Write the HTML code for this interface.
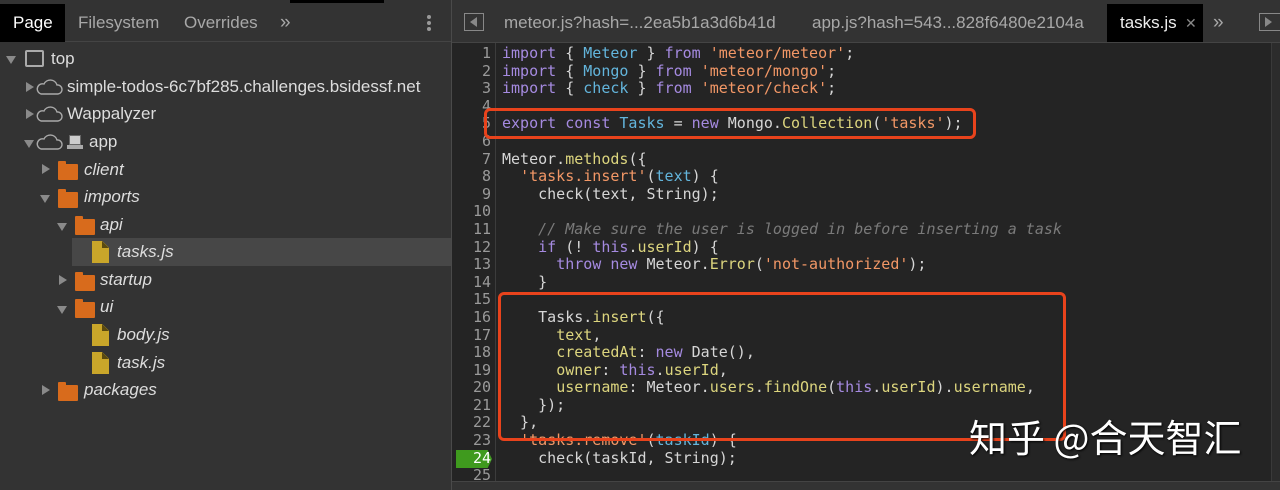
<!DOCTYPE html>
<html><head><meta charset="utf-8"><style>
*{margin:0;padding:0;box-sizing:border-box}
body{width:1280px;height:490px;background:#333;overflow:hidden;position:relative;font-family:"Liberation Sans",sans-serif;color:#ddd}
.abs{position:absolute}
.tab{position:absolute;top:11px;font-size:17px;color:#a8a8a8;line-height:24px}
.row{position:absolute;height:27px;font-size:17px;line-height:27px;color:#ddd;white-space:nowrap}
.tri{position:absolute;width:0;height:0}
.td{border-left:5px solid transparent;border-right:5px solid transparent;border-top:8px solid #8a8a8a}
.tr{border-top:5px solid transparent;border-bottom:5px solid transparent;border-left:8px solid #8a8a8a}
.fold{position:absolute;width:20px;height:16px;background:#d86b1c;border-radius:1px}
.fold:before{content:"";position:absolute;left:0;top:-3px;width:8px;height:4px;background:#d86b1c;border-radius:1px 1px 0 0}
.file{position:absolute;width:17px;height:22px;background:#c9a62a;clip-path:polygon(0 0,60% 0,100% 30%,100% 100%,0 100%)}
.file:after{content:"";position:absolute;left:10px;top:0;width:7px;height:7px;background:#5a4a10;clip-path:polygon(0 0,100% 100%,0 100%)}
i{font-style:italic}
#code{position:absolute;left:452px;top:43px;width:819px;height:438px;background:#242424}
.ln{position:absolute;left:0;width:39px;text-align:right;font:15px/17.6px "DejaVu Sans Mono",monospace;color:#9a9a9a}
.cl{position:absolute;left:50px;font:15px/17.6px "DejaVu Sans Mono",monospace;color:#d6d6d6;white-space:pre}
.k{color:#a58ae0}.s{color:#f29766}.v{color:#63b5dc}.p{color:#dcd57e}.c{color:#7a7a7a;font-style:italic}
</style></head><body>
<div class="abs" style="left:0;top:0;width:452px;height:42px;background:#333;border-bottom:1px solid #444"></div>
<div class="abs" style="left:0;top:4px;width:65px;height:38px;background:#000"></div>
<div class="abs" style="left:290px;top:0;width:94px;height:3px;background:#000"></div>
<div class="tab" style="left:13px;color:#fff">Page</div>
<div class="tab" style="left:78px">Filesystem</div>
<div class="tab" style="left:184px">Overrides</div>
<div class="tab" style="left:280px;font-size:19px">»</div>
<div class="abs" style="left:427px;top:15px;width:4px;height:4px;background:#999;border-radius:2px;box-shadow:0 6px 0 #999,0 12px 0 #999"></div>
<div class="abs" style="left:451px;top:0;width:1px;height:490px;background:#4a4a4a"></div>
<div class="tri td" style="left:6px;top:56px"></div>
<div class="abs" style="left:25px;top:50px;width:19px;height:17px;border:2px solid #aaa;border-radius:2px"></div>
<div class="row" style="left:51px;top:45px">top</div>
<svg class="abs" style="left:0;top:0" width="120" height="160" fill="none" stroke="#aaa" stroke-width="1.4">
<path d="M41 94 h17 a4.5 4.5 0 0 0 -1 -9 a7 7 0 0 0 -13 -1 a5 5 0 0 0 -3 10z"/>
<path d="M41 121 h17 a4.5 4.5 0 0 0 -1 -9 a7 7 0 0 0 -13 -1 a5 5 0 0 0 -3 10z"/>
<path d="M41 149 h17 a4.5 4.5 0 0 0 -1 -9 a7 7 0 0 0 -13 -1 a5 5 0 0 0 -3 10z"/>
</svg>
<div class="tri tr" style="left:26px;top:82px"></div>
<div class="row" style="left:67px;top:73px">simple-todos-6c7bf285.challenges.bsidessf.net</div>
<div class="tri tr" style="left:26px;top:109px"></div>
<div class="row" style="left:67px;top:100px">Wappalyzer</div>
<div class="tri td" style="left:24px;top:140px"></div>
<div class="abs" style="left:69px;top:135px;width:12px;height:10px;background:#ccc;border:1px solid #666"></div>
<div class="abs" style="left:67px;top:145px;width:16px;height:4px;background:#aaa"></div>
<div class="row" style="left:89px;top:128px">app</div>
<div class="tri tr" style="left:42px;top:164px"></div>
<div class="fold" style="left:58px;top:164px"></div>
<div class="row" style="left:84px;top:156px"><i>client</i></div>
<div class="tri td" style="left:40px;top:195px"></div>
<div class="fold" style="left:58px;top:192px"></div>
<div class="row" style="left:84px;top:183px"><i>imports</i></div>
<div class="tri td" style="left:57px;top:223px"></div>
<div class="fold" style="left:75px;top:219px"></div>
<div class="row" style="left:100px;top:211px"><i>api</i></div>
<div class="abs" style="left:72px;top:238px;width:379px;height:28px;background:#474747"></div>
<div class="file" style="left:92px;top:241px"></div>
<div class="row" style="left:117px;top:238px"><i>tasks.js</i></div>
<div class="tri tr" style="left:59px;top:275px"></div>
<div class="fold" style="left:75px;top:275px"></div>
<div class="row" style="left:100px;top:266px"><i>startup</i></div>
<div class="tri td" style="left:57px;top:306px"></div>
<div class="fold" style="left:75px;top:302px"></div>
<div class="row" style="left:100px;top:293px"><i>ui</i></div>
<div class="file" style="left:92px;top:324px"></div>
<div class="row" style="left:117px;top:321px"><i>body.js</i></div>
<div class="file" style="left:92px;top:352px"></div>
<div class="row" style="left:117px;top:349px"><i>task.js</i></div>
<div class="tri tr" style="left:42px;top:385px"></div>
<div class="fold" style="left:58px;top:385px"></div>
<div class="row" style="left:84px;top:376px"><i>packages</i></div>
<div class="abs" style="left:452px;top:42px;width:828px;height:1px;background:#444"></div>
<div class="abs" style="left:464px;top:13px;width:20px;height:18px;border:1.5px solid #888"></div>
<div class="abs" style="left:470px;top:17px;border-top:5px solid transparent;border-bottom:5px solid transparent;border-right:7px solid #888"></div>
<div class="tab" style="left:504px">meteor.js?hash=...2ea5b1a3d6b41d</div>
<div class="tab" style="left:812px">app.js?hash=543...828f6480e2104a</div>
<div class="abs" style="left:1107px;top:4px;width:96px;height:38px;background:#000"></div>
<div class="tab" style="left:1120px;color:#eee">tasks.js</div>
<div class="tab" style="left:1185px;color:#888;font-size:14px">✕</div>
<div class="tab" style="left:1213px;font-size:19px">»</div>
<div class="abs" style="left:1259px;top:13px;width:22px;height:18px;border:1.5px solid #888"></div>
<div class="abs" style="left:1265px;top:17px;border-top:5px solid transparent;border-bottom:5px solid transparent;border-left:7px solid #888"></div>
<div id="code">
<div class="abs" style="left:43px;top:0;width:1px;height:438px;background:#3c3c3c"></div>
<div class="abs" style="left:819px;top:0;width:9px;height:438px;background:#2c2c2c;border-left:1px solid #3a3a3a"></div>
<div class="abs" style="left:4px;top:407px;width:36px;height:18px;background:#3f9a1e;clip-path:polygon(0 0,88% 0,100% 50%,88% 100%,0 100%)"></div>
<div class="ln" style="top:2px">1<br>2<br>3<br>4<br>5<br>6<br>7<br>8<br>9<br>10<br>11<br>12<br>13<br>14<br>15<br>16<br>17<br>18<br>19<br>20<br>21<br>22<br>23<br><span style="color:#fff">24</span><br>25</div>
<div class="cl" style="top:2px"><span class="k">import</span> { <span class="v">Meteor</span> } <span class="k">from</span> <span class="s">'meteor/meteor'</span>;
<span class="k">import</span> { <span class="v">Mongo</span> } <span class="k">from</span> <span class="s">'meteor/mongo'</span>;
<span class="k">import</span> { <span class="v">check</span> } <span class="k">from</span> <span class="s">'meteor/check'</span>;

<span class="k">export const</span> <span class="v">Tasks</span> = <span class="k">new</span> Mongo.<span class="p">Collection</span>(<span class="s">'tasks'</span>);

Meteor.<span class="p">methods</span>({
  <span class="s">'tasks.insert'</span>(<span class="v">text</span>) {
    check(text, String);

    <span class="c">// Make sure the user is logged in before inserting a task</span>
    <span class="k">if</span> (! <span class="k">this</span>.<span class="p">userId</span>) {
      <span class="k">throw new</span> Meteor.<span class="p">Error</span>(<span class="s">'not-authorized'</span>);
    }

    Tasks.<span class="p">insert</span>({
      <span class="p">text</span>,
      <span class="p">createdAt</span>: <span class="k">new</span> Date(),
      <span class="p">owner</span>: <span class="k">this</span>.<span class="p">userId</span>,
      <span class="p">username</span>: Meteor.<span class="p">users</span>.<span class="p">findOne</span>(<span class="k">this</span>.<span class="p">userId</span>).<span class="p">username</span>,
    });
  },
  <span class="s">'tasks.remove'</span>(<span class="v">taskId</span>) {
    check(taskId, String);
</div>
</div>
<div class="abs" style="left:452px;top:481px;width:828px;height:9px;background:#333;border-top:1px solid #444"></div>
<div class="abs" style="left:484px;top:108px;width:492px;height:31px;border:3px solid #e8431c;border-radius:6px"></div>
<div class="abs" style="left:498px;top:292px;width:568px;height:149px;border:3px solid #e8431c;border-radius:6px"></div>
<div class="abs" style="left:969px;top:413px;font:38px/46px 'Noto Sans CJK SC',sans-serif;color:#fff;text-shadow:1px 1px 2px #000;white-space:nowrap">知乎 @合天智汇</div>
</body></html>
